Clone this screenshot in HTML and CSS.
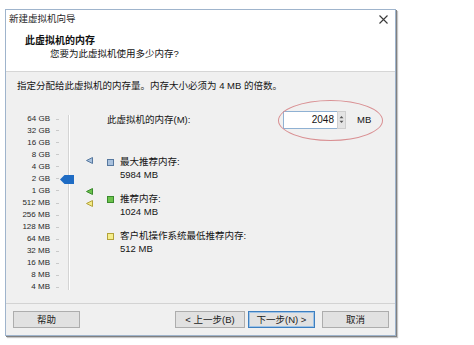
FILE: index.html
```html
<!DOCTYPE html>
<html lang="zh-CN">
<head>
<meta charset="utf-8">
<title>新建虚拟机向导</title>
<link rel="stylesheet" href="styles.css">
</head>
<body>
<div class="dialog">
  <div class="top">
    <div class="titlebar">
      <span class="title">新建虚拟机向导</span>
      <svg class="close" width="9" height="9" viewBox="0 0 9 9"><path d="M0.5 0.5L8.5 8.5M8.5 0.5L0.5 8.5" stroke="#3a3a3a" stroke-width="1.1" fill="none"/></svg>
    </div>
    <div class="heading">此虚拟机的内存</div>
    <div class="subheading">您要为此虚拟机使用多少内存?</div>
  </div>
  <div class="content">
    <div class="instruction">指定分配给此虚拟机的内存量。内存大小必须为 4 MB 的倍数。</div>
    <div class="main">
      <div class="slider">
        <div class="labels">
          <span>64 GB</span><span>32 GB</span><span>16 GB</span><span>8 GB</span><span>4 GB</span><span>2 GB</span><span>1 GB</span><span>512 MB</span><span>256 MB</span><span>128 MB</span><span>64 MB</span><span>32 MB</span><span>16 MB</span><span>8 MB</span><span>4 MB</span>
        </div>
        <div class="ticks">
          <i></i><i></i><i></i><i></i><i></i><i></i><i></i><i></i><i></i><i></i><i></i><i></i><i></i><i></i><i></i>
        </div>
        <div class="track"></div>
        <svg class="thumb" style="top:61.5px" width="14" height="9" viewBox="0 0 14 9"><polygon points="0,4.5 4.5,0 14,0 14,9 4.5,9" fill="#1f6cc4"/></svg>
        <svg class="marker" style="top:44px" width="7" height="7" viewBox="0 0 7 7"><polygon points="0.5,3.5 6.5,0.5 6.5,6.5" fill="#a9c1dd" stroke="#56789f" stroke-width="1"/></svg>
        <svg class="marker" style="top:74.5px" width="7" height="7" viewBox="0 0 7 7"><polygon points="0.5,3.5 6.5,0.5 6.5,6.5" fill="#6cc24c" stroke="#3a8a2e" stroke-width="1"/></svg>
        <svg class="marker" style="top:86.5px" width="7" height="7" viewBox="0 0 7 7"><polygon points="0.5,3.5 6.5,0.5 6.5,6.5" fill="#f3ea86" stroke="#b3a23a" stroke-width="1"/></svg>
      </div>
      <div class="details">
        <div class="memrow">
          <span class="memlabel">此虚拟机的内存(M):</span>
          <div class="spin">
            <div class="spinbox">2048</div>
            <div class="spinner">
              <svg width="9" height="17" viewBox="0 0 9 17"><polygon points="4.5,4 7,7 2,7" fill="#555"/><polygon points="4.5,13 7,10 2,10" fill="#555"/></svg>
            </div>
            <span class="unit">MB</span>
            <div class="highlight"></div>
          </div>
        </div>
        <div class="legend first">
          <span class="sq sq-blue"></span>
          <div class="ltext"><div>最大推荐内存:</div><div>5984 MB</div></div>
        </div>
        <div class="legend">
          <span class="sq sq-green"></span>
          <div class="ltext"><div>推荐内存:</div><div>1024 MB</div></div>
        </div>
        <div class="legend">
          <span class="sq sq-yellow"></span>
          <div class="ltext"><div>客户机操作系统最低推荐内存:</div><div>512 MB</div></div>
        </div>
      </div>
    </div>
  </div>
  <div class="footer">
    <button class="btn btn-help">帮助</button>
    <div class="spacer"></div>
    <button class="btn btn-prev">&lt; 上一步(B)</button>
    <button class="btn btn-next">下一步(N) &gt;</button>
    <button class="btn btn-cancel">取消</button>
  </div>
</div>
</body>
</html>
```

FILE: styles.css
```css
html, body {
  margin: 0;
  padding: 0;
  background: #ffffff;
}
body {
  width: 474px;
  height: 345px;
  overflow: hidden;
  font-family: "Liberation Sans", "Noto Sans CJK SC", sans-serif;
  font-size: 9.5px;
  color: #141414;
}
.dialog {
  box-sizing: border-box;
  margin: 9px 0 0 5px;
  width: 391px;
  height: 327px;
  border: 1px solid #9fb4cc;
  box-shadow: 1px 1px 0 #808080, 2px 2px 1px rgba(0,0,0,0.22);
  background: #f0f0f0;
  display: flex;
  flex-direction: column;
}
.top {
  box-sizing: border-box;
  height: 62px;
  background: #ffffff;
  border-bottom: 1px solid #d6d6d6;
  flex: none;
}
.titlebar {
  height: 17px;
  display: flex;
  align-items: center;
  padding: 0 7px 0 3px;
}
.title {
  flex: 1;
  color: #2a2a2a;
  line-height: 17px;
}
.close {
  margin-top: 2px;
}
.heading {
  margin-top: 8px;
  padding-left: 19px;
  font-weight: bold;
  font-size: 10px;
  line-height: 12px;
  color: #111;
}
.subheading {
  padding-left: 44px;
  line-height: 12px;
  margin-top: 0.5px;
}
.content {
  flex: 1;
  padding: 8px 0 0 11px;
}
.instruction {
  line-height: 12px;
}
.main {
  display: flex;
  margin-top: 18px;
}
.slider {
  position: relative;
  width: 90px;
  margin-top: 3px;
  display: flex;
  height: 180px;
}
.labels {
  width: 33px;
  display: flex;
  flex-direction: column;
  align-items: flex-end;
  font-size: 8px;
  color: #2a2a2a;
}
.labels span {
  height: 12px;
  line-height: 12px;
  white-space: nowrap;
}
.ticks {
  margin-left: 6px;
  display: flex;
  flex-direction: column;
}
.ticks i {
  display: block;
  height: 12px;
  width: 3px;
  background: linear-gradient(#0000 5.5px, #c9c9c9 5.5px, #c9c9c9 6.5px, #0000 6.5px);
}
.track {
  margin-left: 9px;
  margin-top: 2px;
  width: 1px;
  height: 175px;
  background: #d4d4d4;
  border-right: 1px solid #ffffff;
}
.thumb {
  position: absolute;
  left: 43px;
}
.marker {
  position: absolute;
  left: 69px;
}
.details {
  flex: 1;
}
.memrow {
  display: grid;
  grid-template-columns: 176px auto;
  align-items: center;
  height: 19px;
}
.memlabel {
  line-height: 12px;
}
.spin {
  position: relative;
  display: flex;
  align-items: center;
}
.spinbox {
  box-sizing: border-box;
  width: 54px;
  height: 18px;
  background: #fff;
  border: 1px solid #8fb1d3;
  border-right: none;
  text-align: right;
  padding-right: 3px;
  line-height: 16px;
  font-size: 10px;
}
.spinner {
  box-sizing: border-box;
  width: 9px;
  height: 18px;
  background: #e4e4e4;
  border: 1px solid #cfcfcf;
  display: flex;
  align-items: center;
  justify-content: center;
  overflow: hidden;
}
.spinner svg {
  display: block;
}
.unit {
  margin-left: 11px;
  line-height: 12px;
}
.highlight {
  position: absolute;
  left: -5px;
  top: -11px;
  width: 105px;
  height: 41px;
  border: 1.5px solid #d98f92;
  border-radius: 50%;
  box-sizing: border-box;
}
.legend {
  display: flex;
  align-items: flex-start;
  margin-top: 12px;
}
.legend.first {
  margin-top: 27px;
}
.sq {
  box-sizing: border-box;
  width: 7px;
  height: 7px;
  margin-top: 3px;
  margin-right: 6px;
  border: 1px solid;
}
.sq-blue { background: #a9c1dd; border-color: #56789f; }
.sq-green { background: #6cc24c; border-color: #3a8a2e; }
.sq-yellow { background: #f5ee8c; border-color: #b3a23a; }
.ltext div {
  line-height: 12.5px;
}
.footer {
  flex: none;
  box-sizing: border-box;
  height: 32px;
  border-top: 1px solid #d3d3d3;
  display: flex;
  align-items: flex-start;
  padding: 7px 6px 0 7px;
}
.spacer {
  flex: 1;
}
.btn {
  box-sizing: border-box;
  height: 17px;
  width: 67px;
  padding: 0;
  margin: 0;
  background: #e1e1e1;
  border: 1px solid #adadad;
  font-family: "Liberation Sans", "Noto Sans CJK SC", sans-serif;
  font-size: 9.5px;
  line-height: 15px;
  color: #1b1b1b;
}
.btn-prev {
  width: 70px;
}
.btn-next {
  margin-left: 3px;
  border-color: #3d7fc0;
  box-shadow: inset 0 0 0 1px #9fc3e6;
}
.btn-cancel {
  margin-left: 7px;
}
```
